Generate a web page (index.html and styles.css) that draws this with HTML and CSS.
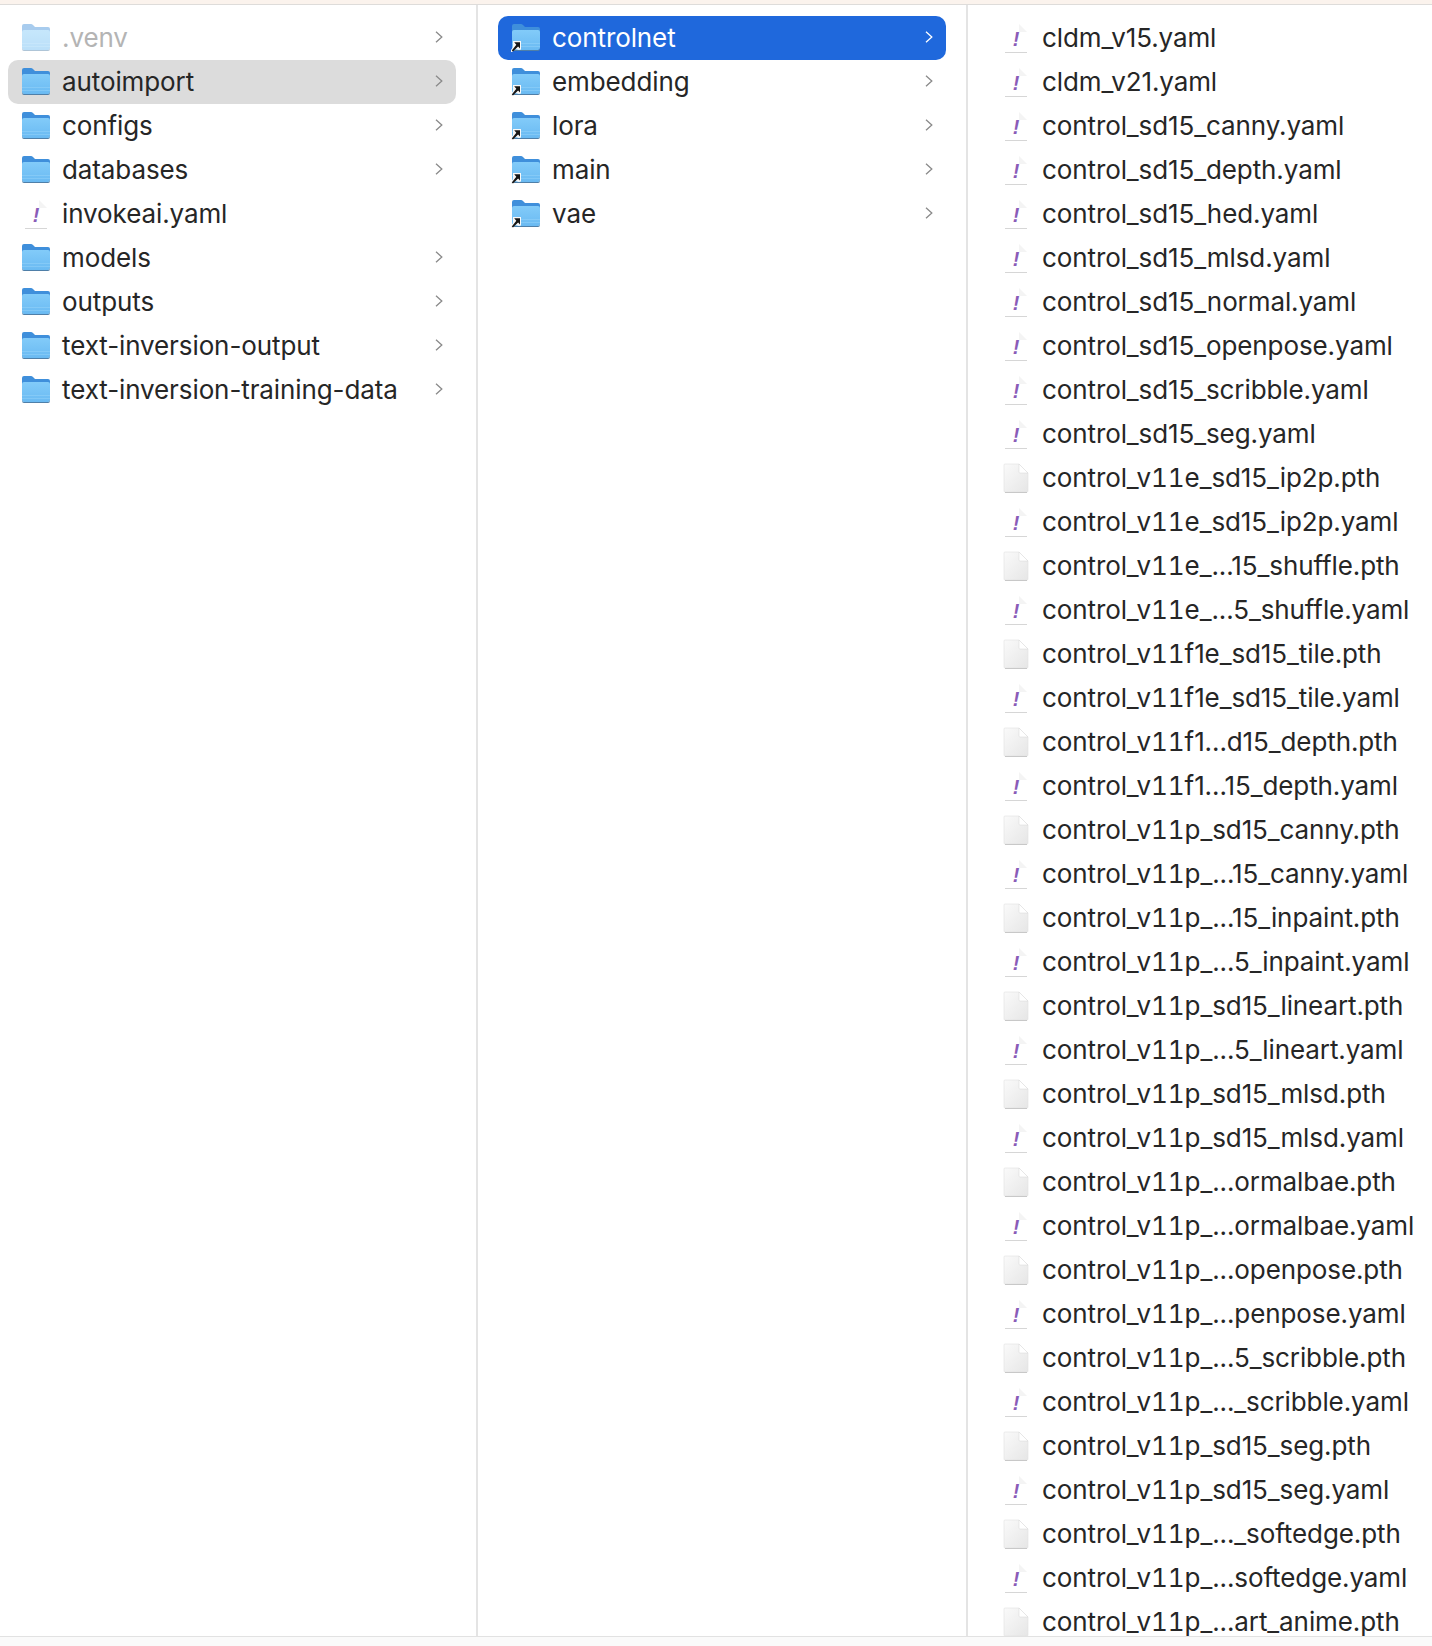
FILE: index.html
```html
<!doctype html>
<html>
  <head>
    <meta charset="utf-8">
    <title>Finder</title>
    <link rel="stylesheet" href="styles.css">
  </head>
  <body>
    <svg class="defs" width="0" height="0">
      <defs>
        <linearGradient id="folder-front" x1="0" y1="0" x2="0" y2="1">
          <stop offset="0" stop-color="#82cbf9"/>
          <stop offset="1" stop-color="#6abaf2"/>
        </linearGradient>
        <linearGradient id="file-fill" x1="0" y1="0" x2="1" y2="1">
          <stop offset="0" stop-color="#fafafa"/>
          <stop offset="1" stop-color="#e6e6e6"/>
        </linearGradient>
        <symbol id="folder" viewBox="0 0 28 29">
          <path d="M0 4q0-2 2-2h7q1 0 2 1l2 2h13q2 0 2 2v8H0z" fill="#3f8fdb"/>
          <path d="M0 10q0-2 2-2h24q2 0 2 2v16q0 2-2 2H2q-2 0-2-2z" fill="url(#folder-front)"/>
          <path d="M0 21h28v1H0zM0 24h28v1H0z" fill="#a6dcfb" opacity=".35"/>
          <path d="M0 26q0 2 2 2h24q2 0 2-2v1q0 2-2 2H2q-2 0-2-2z" fill="#4f7fa8"/>
        </symbol>
        <symbol id="alias" viewBox="0 0 10 11">
          <path d="M2 0h8v8.500L8 9 4.500 8 1 11H0V9l2-3z" fill="#f8f8f8"/>
          <path d="M3.200 1.300H9V7.500L7.100 5.600 2 10.500 .8 9.600 5.300 3.800z" fill="#161616"/>
        </symbol>
        <symbol id="file" viewBox="0 0 28 30">
          <path d="M2 2q0-1 1-1h14l9 9v18q0 1-1 1H3q-1 0-1-1z" fill="url(#file-fill)" stroke="#e0e0e0" stroke-width=".6"/>
          <path d="M17 1l9 9h-8q-1 0-1-1z" fill="#fff" stroke="#d6d6d6" stroke-width=".5"/>
          <path d="M3 29.500h22" stroke="#c8c8c8"/>
        </symbol>
        <symbol id="yaml" viewBox="0 0 28 30">
          <path d="M3 1h14l8 8v20H3z" fill="#fff"/>
          <path d="M17 1l8 8h-8z" fill="#f4f4f4"/>
          <path d="M3 29.500h22" stroke="#d6d6d6"/>
          <text class="bang" x="14" y="23">!</text>
        </symbol>
        <symbol id="chevron" viewBox="0 0 8 12">
          <path d="M1 .8 6.800 6 1 11.200" fill="none" stroke="currentColor" stroke-width="1.300"/>
        </symbol>
      </defs>
    </svg>

    <div class="titlebar"></div>

    <div class="browser">
      <div class="column column-first">
        <div class="row row-hidden"><span class="icon"><svg class="folder"><use href="#folder"/></svg></span><span class="name">.venv</span><svg class="chevron"><use href="#chevron"/></svg></div>
        <div class="row row-parent"><span class="icon"><svg class="folder"><use href="#folder"/></svg></span><span class="name">autoimport</span><svg class="chevron"><use href="#chevron"/></svg></div>
        <div class="row"><span class="icon"><svg class="folder"><use href="#folder"/></svg></span><span class="name">configs</span><svg class="chevron"><use href="#chevron"/></svg></div>
        <div class="row"><span class="icon"><svg class="folder"><use href="#folder"/></svg></span><span class="name">databases</span><svg class="chevron"><use href="#chevron"/></svg></div>
        <div class="row"><span class="icon"><svg class="file"><use href="#yaml"/></svg></span><span class="name">invokeai.yaml</span></div>
        <div class="row"><span class="icon"><svg class="folder"><use href="#folder"/></svg></span><span class="name">models</span><svg class="chevron"><use href="#chevron"/></svg></div>
        <div class="row"><span class="icon"><svg class="folder"><use href="#folder"/></svg></span><span class="name">outputs</span><svg class="chevron"><use href="#chevron"/></svg></div>
        <div class="row"><span class="icon"><svg class="folder"><use href="#folder"/></svg></span><span class="name">text-inversion-output</span><svg class="chevron"><use href="#chevron"/></svg></div>
        <div class="row"><span class="icon"><svg class="folder"><use href="#folder"/></svg></span><span class="name">text-inversion-training-data</span><svg class="chevron"><use href="#chevron"/></svg></div>
      </div>

      <div class="column column-second">
        <div class="row row-selected"><span class="icon"><svg class="folder"><use href="#folder"/></svg><svg class="alias"><use href="#alias"/></svg></span><span class="name">controlnet</span><svg class="chevron"><use href="#chevron"/></svg></div>
        <div class="row"><span class="icon"><svg class="folder"><use href="#folder"/></svg><svg class="alias"><use href="#alias"/></svg></span><span class="name">embedding</span><svg class="chevron"><use href="#chevron"/></svg></div>
        <div class="row"><span class="icon"><svg class="folder"><use href="#folder"/></svg><svg class="alias"><use href="#alias"/></svg></span><span class="name">lora</span><svg class="chevron"><use href="#chevron"/></svg></div>
        <div class="row"><span class="icon"><svg class="folder"><use href="#folder"/></svg><svg class="alias"><use href="#alias"/></svg></span><span class="name">main</span><svg class="chevron"><use href="#chevron"/></svg></div>
        <div class="row"><span class="icon"><svg class="folder"><use href="#folder"/></svg><svg class="alias"><use href="#alias"/></svg></span><span class="name">vae</span><svg class="chevron"><use href="#chevron"/></svg></div>
      </div>

      <div class="column column-third">
        <div class="row"><span class="icon"><svg class="file"><use href="#yaml"/></svg></span><span class="name">cldm_v15.yaml</span></div>
        <div class="row"><span class="icon"><svg class="file"><use href="#yaml"/></svg></span><span class="name">cldm_v21.yaml</span></div>
        <div class="row"><span class="icon"><svg class="file"><use href="#yaml"/></svg></span><span class="name">control_sd15_canny.yaml</span></div>
        <div class="row"><span class="icon"><svg class="file"><use href="#yaml"/></svg></span><span class="name">control_sd15_depth.yaml</span></div>
        <div class="row"><span class="icon"><svg class="file"><use href="#yaml"/></svg></span><span class="name">control_sd15_hed.yaml</span></div>
        <div class="row"><span class="icon"><svg class="file"><use href="#yaml"/></svg></span><span class="name">control_sd15_mlsd.yaml</span></div>
        <div class="row"><span class="icon"><svg class="file"><use href="#yaml"/></svg></span><span class="name">control_sd15_normal.yaml</span></div>
        <div class="row"><span class="icon"><svg class="file"><use href="#yaml"/></svg></span><span class="name">control_sd15_openpose.yaml</span></div>
        <div class="row"><span class="icon"><svg class="file"><use href="#yaml"/></svg></span><span class="name">control_sd15_scribble.yaml</span></div>
        <div class="row"><span class="icon"><svg class="file"><use href="#yaml"/></svg></span><span class="name">control_sd15_seg.yaml</span></div>
        <div class="row"><span class="icon"><svg class="file"><use href="#file"/></svg></span><span class="name">control_v<span class="ver">11</span>e_sd15_ip2p.pth</span></div>
        <div class="row"><span class="icon"><svg class="file"><use href="#yaml"/></svg></span><span class="name">control_v<span class="ver">11</span>e_sd15_ip2p.yaml</span></div>
        <div class="row"><span class="icon"><svg class="file"><use href="#file"/></svg></span><span class="name">control_v<span class="ver">11</span>e_...15_shuffle.pth</span></div>
        <div class="row"><span class="icon"><svg class="file"><use href="#yaml"/></svg></span><span class="name">control_v<span class="ver">11</span>e_...5_shuffle.yaml</span></div>
        <div class="row"><span class="icon"><svg class="file"><use href="#file"/></svg></span><span class="name">control_v<span class="ver">11</span>f1e_sd15_tile.pth</span></div>
        <div class="row"><span class="icon"><svg class="file"><use href="#yaml"/></svg></span><span class="name">control_v<span class="ver">11</span>f1e_sd15_tile.yaml</span></div>
        <div class="row"><span class="icon"><svg class="file"><use href="#file"/></svg></span><span class="name">control_v<span class="ver">11</span>f1...d15_depth.pth</span></div>
        <div class="row"><span class="icon"><svg class="file"><use href="#yaml"/></svg></span><span class="name">control_v<span class="ver">11</span>f1...15_depth.yaml</span></div>
        <div class="row"><span class="icon"><svg class="file"><use href="#file"/></svg></span><span class="name">control_v<span class="ver">11</span>p_sd15_canny.pth</span></div>
        <div class="row"><span class="icon"><svg class="file"><use href="#yaml"/></svg></span><span class="name">control_v<span class="ver">11</span>p_...15_canny.yaml</span></div>
        <div class="row"><span class="icon"><svg class="file"><use href="#file"/></svg></span><span class="name">control_v<span class="ver">11</span>p_...15_inpaint.pth</span></div>
        <div class="row"><span class="icon"><svg class="file"><use href="#yaml"/></svg></span><span class="name">control_v<span class="ver">11</span>p_...5_inpaint.yaml</span></div>
        <div class="row"><span class="icon"><svg class="file"><use href="#file"/></svg></span><span class="name">control_v<span class="ver">11</span>p_sd15_lineart.pth</span></div>
        <div class="row"><span class="icon"><svg class="file"><use href="#yaml"/></svg></span><span class="name">control_v<span class="ver">11</span>p_...5_lineart.yaml</span></div>
        <div class="row"><span class="icon"><svg class="file"><use href="#file"/></svg></span><span class="name">control_v<span class="ver">11</span>p_sd15_mlsd.pth</span></div>
        <div class="row"><span class="icon"><svg class="file"><use href="#yaml"/></svg></span><span class="name">control_v<span class="ver">11</span>p_sd15_mlsd.yaml</span></div>
        <div class="row"><span class="icon"><svg class="file"><use href="#file"/></svg></span><span class="name">control_v<span class="ver">11</span>p_...ormalbae.pth</span></div>
        <div class="row"><span class="icon"><svg class="file"><use href="#yaml"/></svg></span><span class="name">control_v<span class="ver">11</span>p_...ormalbae.yaml</span></div>
        <div class="row"><span class="icon"><svg class="file"><use href="#file"/></svg></span><span class="name">control_v<span class="ver">11</span>p_...openpose.pth</span></div>
        <div class="row"><span class="icon"><svg class="file"><use href="#yaml"/></svg></span><span class="name">control_v<span class="ver">11</span>p_...penpose.yaml</span></div>
        <div class="row"><span class="icon"><svg class="file"><use href="#file"/></svg></span><span class="name">control_v<span class="ver">11</span>p_...5_scribble.pth</span></div>
        <div class="row"><span class="icon"><svg class="file"><use href="#yaml"/></svg></span><span class="name">control_v<span class="ver">11</span>p_..._scribble.yaml</span></div>
        <div class="row"><span class="icon"><svg class="file"><use href="#file"/></svg></span><span class="name">control_v<span class="ver">11</span>p_sd15_seg.pth</span></div>
        <div class="row"><span class="icon"><svg class="file"><use href="#yaml"/></svg></span><span class="name">control_v<span class="ver">11</span>p_sd15_seg.yaml</span></div>
        <div class="row"><span class="icon"><svg class="file"><use href="#file"/></svg></span><span class="name">control_v<span class="ver">11</span>p_..._softedge.pth</span></div>
        <div class="row"><span class="icon"><svg class="file"><use href="#yaml"/></svg></span><span class="name">control_v<span class="ver">11</span>p_...softedge.yaml</span></div>
        <div class="row"><span class="icon"><svg class="file"><use href="#file"/></svg></span><span class="name">control_v<span class="ver">11</span>p_...art_anime.pth</span></div>
      </div>
    </div>

    <div class="statusbar"></div>
  </body>
</html>
```
FILE: styles.css
```css
* {
  box-sizing: border-box;
}

html,
body {
  height: 100%;
}

body {
  margin: 0;
  display: flex;
  flex-direction: column;
  background-color: #fff;
  color: #262626;
  font-family: Inter, "Liberation Sans", sans-serif;
  font-size: 26px;
  letter-spacing: -.1px;
  overflow: hidden;
}

.defs {
  position: absolute;
}

.bang {
  fill: #8a5cb8;
  font-family: "Liberation Sans", sans-serif;
  font-size: 20px;
  font-style: italic;
  font-weight: 700;
  text-anchor: middle;
}

.titlebar {
  flex: none;
  height: 5px;
  background-color: #fbf3ed;
  border-bottom: 1px solid #dedcda;
}

.browser {
  flex: none;
  display: flex;
  height: 1631px;
  overflow: hidden;
}

.statusbar {
  flex: 1;
  background-color: #fafafa;
  border-top: 1px solid #e2e2e2;
}

.column {
  padding: 11px 20px 0;
  overflow: hidden;
}

.column-first {
  flex: none;
  width: 478px;
  padding-left: 8px;
  border-right: 2px solid #e4e4e4;
}

.column-second {
  flex: none;
  width: 490px;
  border-right: 2px solid #e4e4e4;
}

.column-third {
  flex: 1;
}

.row {
  display: flex;
  align-items: center;
  gap: 12px;
  height: 44px;
  padding: 0 13px 0 14px;
  border-radius: 10px;
  white-space: nowrap;
}

.row-parent {
  background-color: #dcdcdc;
}

.row-selected {
  background-color: #1f68dc;
  color: #fff;
}

.row-hidden {
  color: #b4b4b4;
}

.row-hidden .icon {
  opacity: .45;
}

.icon {
  position: relative;
  flex: none;
  width: 28px;
  height: 44px;
}

.folder {
  position: absolute;
  left: 0;
  top: 6px;
  width: 28px;
  height: 29px;
}

.file {
  position: absolute;
  left: 0;
  top: 7px;
  width: 28px;
  height: 30px;
}

.alias {
  position: absolute;
  left: -1px;
  top: 25px;
  width: 10px;
  height: 11px;
}

.name {
  flex: 1;
  padding-bottom: 2px;
}

.ver {
  font-variant-numeric: tabular-nums;
}

.chevron {
  flex: none;
  width: 8px;
  height: 12px;
  margin-bottom: 2px;
  color: #8a8a8a;
}

.row-selected .chevron {
  color: #fff;
}
```
